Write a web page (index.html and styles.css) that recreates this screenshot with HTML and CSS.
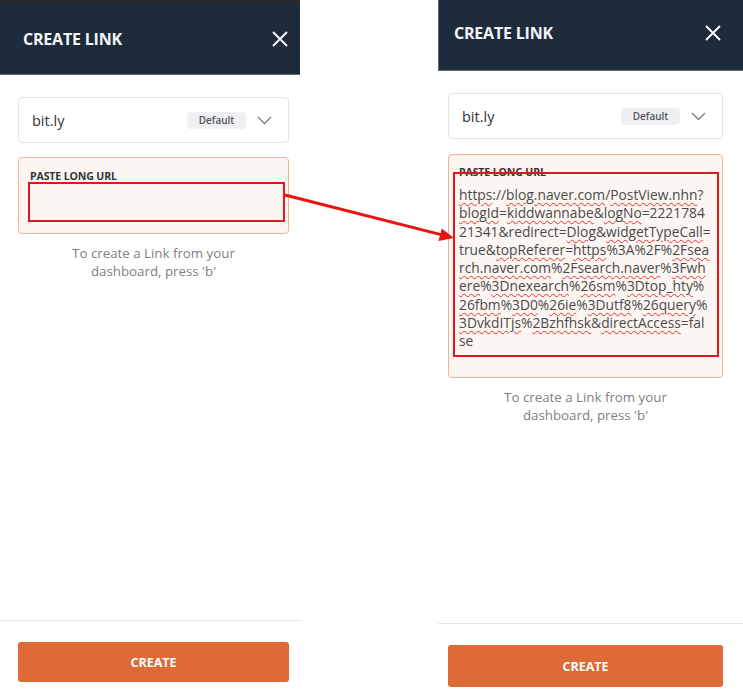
FILE: index.html
```html
<!DOCTYPE html>
<html lang="en">
<head>
<meta charset="utf-8">
<title>Create Link</title>
<link rel="stylesheet" href="styles.css">
</head>
<body>
<div class="page">
  <section class="panel panel-left">
    <div class="topline"></div>
    <header class="head">
      <h1 class="title">CREATE LINK</h1>
      <svg class="close" width="16" height="16" viewBox="0 0 16 16"><path d="M1 1 L15 15 M15 1 L1 15" stroke="#fff" stroke-width="1.8" fill="none"/></svg>
    </header>
    <div class="body">
      <div class="domain">
        <span class="domain-name">bit.ly</span>
        <span class="badge">Default</span>
        <svg class="chev" width="15" height="9" viewBox="0 0 15 9"><path d="M1 1 L7.5 7.5 L14 1" stroke="#7a7a7a" stroke-width="1.3" fill="none"/></svg>
      </div>
      <div class="paste">
        <div class="paste-label">PASTE LONG URL</div>
        <div class="url-empty"></div>
      </div>
      <p class="help">To create a Link from your<br>dashboard, press 'b'</p>
    </div>
    <div class="spacer"></div>
    <footer class="foot">
      <button class="create">CREATE</button>
    </footer>
  </section>

  <section class="panel panel-right">
    <header class="head">
      <h1 class="title">CREATE LINK</h1>
      <svg class="close" width="16" height="16" viewBox="0 0 16 16"><path d="M1 1 L15 15 M15 1 L1 15" stroke="#fff" stroke-width="1.8" fill="none"/></svg>
    </header>
    <div class="body">
      <div class="domain">
        <span class="domain-name">bit.ly</span>
        <span class="badge">Default</span>
        <svg class="chev" width="15" height="9" viewBox="0 0 15 9"><path d="M1 1 L7.5 7.5 L14 1" stroke="#7a7a7a" stroke-width="1.3" fill="none"/></svg>
      </div>
      <div class="paste paste-full">
        <div class="paste-label">PASTE LONG URL</div>
        <div class="url-text">
          <div class="ln"><span class="sp">https</span>://<span class="sp">blog.naver.com</span>/<span class="sp">PostView.nhn</span>?</div>
          <div class="ln"><span class="sp">blogId</span>=<span class="sp">kiddwannabe</span>&amp;<span class="sp">logNo</span>=2221784</div>
          <div class="ln">21341&amp;redirect=<span class="sp">Dlog</span>&amp;<span class="sp">widgetTypeCall</span>=</div>
          <div class="ln">true&amp;<span class="sp">topReferer</span>=<span class="sp">https</span>%3A%2F%<span class="sp">2Fsea</span></div>
          <div class="ln"><span class="sp">rch.naver.com</span>%<span class="sp">2Fsearch.naver</span>%<span class="sp">3Fwh</span></div>
          <div class="ln"><span class="sp">ere</span>%<span class="sp">3Dnexearch</span>%<span class="sp">26sm</span>%<span class="sp">3Dtop_hty</span>%</div>
          <div class="ln"><span class="sp">26fbm</span>%<span class="sp">3D0</span>%<span class="sp">26ie</span>%<span class="sp">3Dutf8</span>%<span class="sp">26query</span>%</div>
          <div class="ln"><span class="sp">3DvkdITjs</span>%<span class="sp">2Bzhfhsk</span>&amp;<span class="sp">directAccess</span>=fal</div>
          <div class="ln">se</div>
        </div>
        <div class="annot-box"></div>
      </div>
      <p class="help">To create a Link from your<br>dashboard, press 'b'</p>
    </div>
    <div class="spacer"></div>
    <footer class="foot">
      <button class="create">CREATE</button>
    </footer>
  </section>

  <svg class="arrow" width="743" height="700" viewBox="0 0 743 700">
    <line x1="285" y1="195" x2="441" y2="234.6" stroke="#ee1111" stroke-width="3"/>
    <polygon points="454,238 438.5,241 441.8,228.4" fill="#ee1111"/>
  </svg>
</div>
</body>
</html>
```

FILE: styles.css
```css
* { box-sizing: border-box; }
html, body { margin: 0; padding: 0; background: #fff; }
body { font-family: "Open Sans", "Liberation Sans", sans-serif; color: #333; }

.page {
  position: relative;
  width: 743px;
  height: 700px;
  display: flex;
  gap: 138px;
  overflow: hidden;
}

.panel {
  height: 700px;
  display: flex;
  flex-direction: column;
  background: #fff;
}
.panel-left { width: 300px; }
.panel-right { width: 305px; }

.topline { height: 3px; background: #2a2a2a; }

.head {
  background: #1e2b3b;
  display: flex;
  align-items: center;
  justify-content: space-between;
  border-bottom: 1px solid #5e6a78;
}
.panel-left .head { height: 72px; padding: 0 12px 0 23px; }
.panel-right .head { height: 71px; padding: 0 22px 4px 15px; border-left: 1px solid #5e6a78; }

.title {
  margin: 0;
  color: #f4f5f7;
  font-size: 16px;
  font-weight: 700;
  letter-spacing: -0.2px;
}
.close { display: block; }

.panel-left .body { padding: 22px 11px 0 18px; }
.panel-right .body { padding: 22px 20px 0 10px; }

.domain {
  height: 46px;
  border: 1px solid #e1e4e8;
  border-radius: 4px;
  display: flex;
  align-items: center;
  padding: 0 16px 0 13px;
}
.domain-name { font-size: 14.5px; color: #333; flex: 1; }
.badge {
  background: #eef0f3;
  color: #555;
  font-size: 10px;
  font-weight: 600;
  height: 17px;
  line-height: 17px;
  width: 59px;
  text-align: center;
  border-radius: 4px;
  margin-right: 11px;
}
.chev { display: block; }

.paste {
  position: relative;
  margin-top: 14px;
  border: 1px solid #f1b49b;
  background: #fcf6f2;
  border-radius: 4px;
  padding: 12px 3px 11px 9px;
}
.panel-right .paste { margin-top: 15px; padding: 11px 4px 26px 10px; }

.paste-label {
  font-size: 10.5px;
  font-weight: 700;
  line-height: 12px;
  color: #333;
  letter-spacing: -0.1px;
}
.panel-left .paste-label { padding-left: 2px; }

.url-empty {
  height: 40px;
  border: 2px solid #e8141c;
}

.url-text {
  margin-top: 8px;
  font-size: 13.8px;
  line-height: 18.3px;
  color: #4a4a4a;
  white-space: nowrap;
}
.sp {
  text-decoration: underline wavy #e8302c;
  text-decoration-thickness: 1px;
  text-underline-offset: 2px;
}

.annot-box {
  position: absolute;
  left: 4px;
  top: 17px;
  width: 266px;
  height: 185px;
  border: 2px solid #e8141c;
}

.help {
  margin: 10px 0 0;
  text-align: center;
  color: #808080;
  font-size: 13.3px;
  line-height: 18px;
}

.spacer { flex: 1; }

.foot { border-top: 1px solid #e6e6e6; }
.panel-left .foot { padding: 21px 11px 18px 18px; }
.panel-right .foot { padding: 21px 20px 13px 10px; }

.create {
  display: block;
  width: 100%;
  height: 40px;
  border: 0;
  border-radius: 3px;
  background: #dd6a37;
  color: #fff;
  font-family: "Open Sans", "Liberation Sans", sans-serif;
  font-size: 12.5px;
  font-weight: 700;
}
.panel-right .create { height: 42px; }

.arrow {
  position: absolute;
  left: 0;
  top: 0;
  pointer-events: none;
}
```
